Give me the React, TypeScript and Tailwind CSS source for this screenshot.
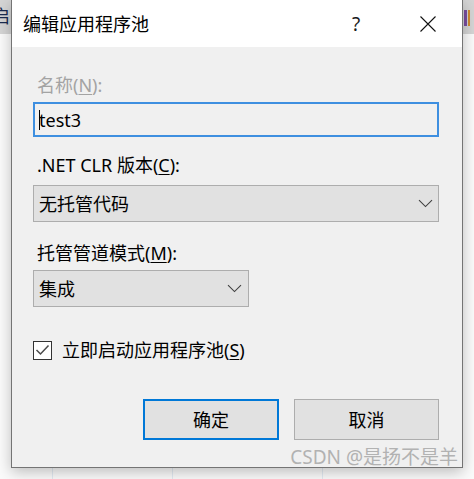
const font = "font-['Segoe_UI','Noto_Sans','Noto_Sans_CJK_SC',sans-serif]";

const Chevron = () => (
  <svg width="15" height="9" viewBox="0 0 15 9" fill="none">
    <path d="M1 1.2 L7.5 7.6 L14 1.2" stroke="#404040" strokeWidth="1.1" />
  </svg>
);

const Select = ({ value, width, chevronRight }: { value: string; width: string; chevronRight: string }) => (
  <div
    className={`flex items-center justify-between h-[37px] ${width} border border-[#adadad] bg-[#e1e1e1] pl-[5px] ${chevronRight}`}
  >
    <span className="text-[18px] leading-[24px] text-black">{value}</span>
    <Chevron />
  </div>
);

const Label = ({ children, muted }: { children: React.ReactNode; muted?: boolean }) => (
  <div className={`pl-[4px] text-[18px] leading-[24px] ${muted ? "text-[#a3a3a3]" : "text-black"}`}>
    {children}
  </div>
);

export default function App() {
  return (
    <div className={`relative w-[474px] h-[479px] overflow-hidden bg-[#fbfbfb] ${font}`}>
      {/* window behind the dialog */}
      <div className="absolute left-0 top-0 w-full h-[34px] bg-[#d5d5d5]">
        <div className="absolute left-0 top-[4px] w-[11px] h-[24px] overflow-hidden">
          <span className="block ml-[-8px] text-[18px] leading-[24px] text-[#1a2b50] whitespace-nowrap">启</span>
        </div>
        <div className="absolute right-[4px] top-[10px] flex gap-[1px]">
          <div className="w-[2px] h-[16px] bg-[#4a7fc0]" />
          <div className="w-[3px] h-[16px] bg-[#7a4fa0]" />
          <div className="w-[2px] h-[16px] bg-[#d08a30]" />
        </div>
      </div>
      <div className="absolute left-[52px] top-[466px] w-px h-[13px] bg-[#e3ebf3]" />
      <div className="absolute left-[172px] top-[466px] w-px h-[13px] bg-[#e3ebf3]" />
      <div className="absolute left-[322px] top-[466px] w-px h-[13px] bg-[#e3ebf3]" />

      <div className="relative ml-[11px] w-[452px] h-[468px] border border-t-0 border-[#747474] bg-[#f0f0f0] shadow-[0_4px_14px_rgba(0,0,0,0.25)] flex flex-col">
        {/* title bar */}
        <div className="h-[47px] bg-white flex items-center">
          <span className="ml-[11px] text-[18px] leading-[24px] text-black">编辑应用程序池</span>
          <span className="ml-auto w-[10px] text-center text-[19px] leading-[24px] text-[#1a1a1a]">?</span>
          <svg className="ml-[59px] mr-[26px]" width="16" height="16" viewBox="0 0 16 16">
            <path d="M0.5 0.5 L15.5 15.5 M15.5 0.5 L0.5 15.5" stroke="#111" strokeWidth="1.1" />
          </svg>
        </div>

        <div className="flex flex-col pl-[21px]">
          <div className="mt-[26px]">
            <Label muted>
              名称(<span className="underline underline-offset-2">N</span>):
            </Label>
          </div>
          <div className="mt-[5px] relative h-[35px] w-[406px] border-2 border-[#3e8fe0] bg-[#f0f0f0] flex items-center pl-[4px]">
            <span className="text-[18px] leading-[24px] text-black">test3</span>
            <div className="absolute left-[4px] top-[6px] w-px h-[20px] bg-black" />
          </div>

          <div className="mt-[16px]">
            <Label>
              .NET CLR 版本(<span className="underline underline-offset-2">C</span>):
            </Label>
          </div>
          <div className="mt-[8px]">
            <Select value="无托管代码" width="w-[406px]" chevronRight="pr-[5px]" />
          </div>

          <div className="mt-[19px]">
            <Label>
              托管管道模式(<span className="underline underline-offset-2">M</span>):
            </Label>
          </div>
          <div className="mt-[5px]">
            <Select value="集成" width="w-[216px]" chevronRight="pr-[6px]" />
          </div>

          <div className="mt-[31px] flex items-center h-[24px]">
            <div className="w-[19px] h-[19px] border-[1.5px] border-[#333] bg-white flex items-center justify-center">
              <svg width="15" height="12" viewBox="0 0 15 12" fill="none">
                <path d="M1.5 6 L5.5 10 L13.5 1.5" stroke="#4a4a4a" strokeWidth="1.5" />
              </svg>
            </div>
            <span className="ml-[10px] text-[18px] leading-[24px] text-black">
              立即启动应用程序池(<span className="underline underline-offset-2">S</span>)
            </span>
          </div>

          <div className="mt-[37px] flex pl-[110px] gap-[15px]">
            <button className="w-[136px] h-[41px] border-2 border-[#0078d7] bg-[#e1e1e1] text-[18px] leading-[24px] text-black">
              确定
            </button>
            <button className="w-[145px] h-[41px] border border-[#adadad] bg-[#e1e1e1] text-[18px] leading-[24px] text-black">
              取消
            </button>
          </div>
        </div>

        <div className="absolute right-[4px] bottom-[-2px] text-[19px] leading-[24px] text-[#b2b2b2]">
          CSDN @是扬不是羊
        </div>
      </div>
    </div>
  );
}
